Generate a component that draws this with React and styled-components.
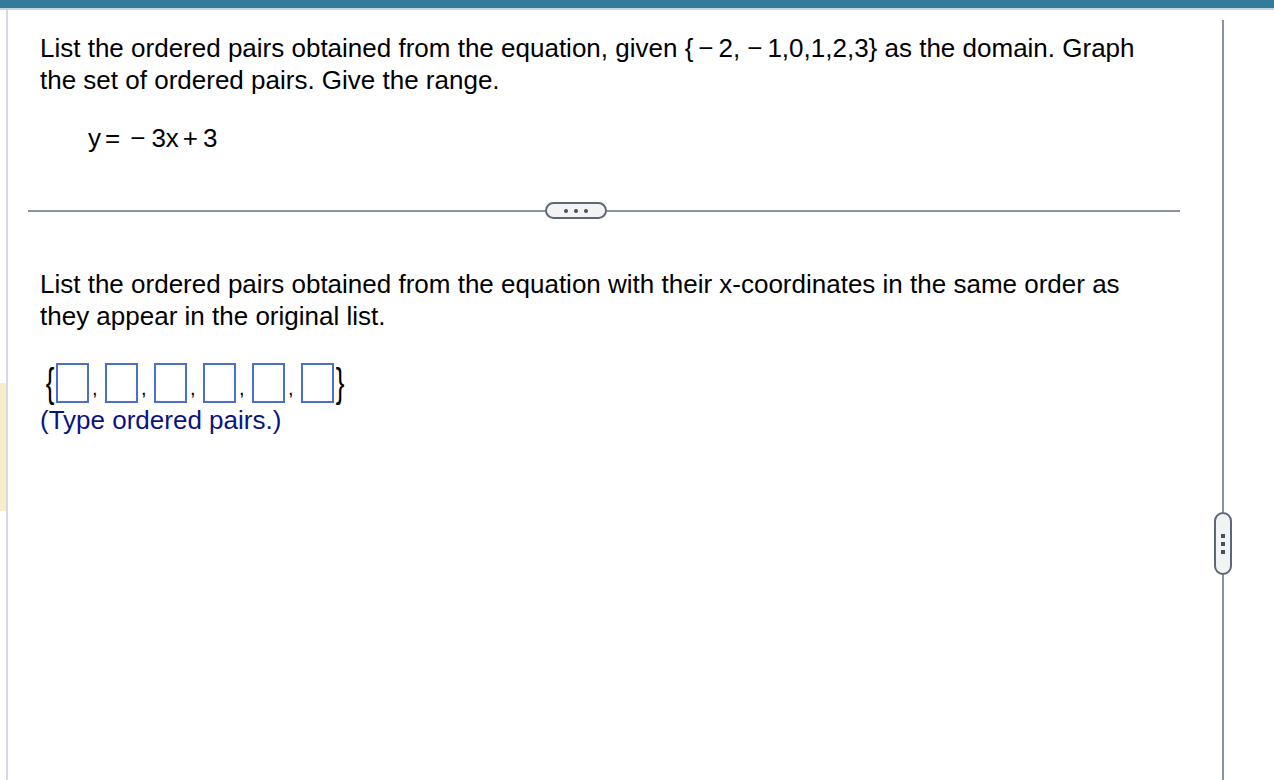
import React from 'react';
import styled, { createGlobalStyle } from 'styled-components';

const GlobalStyle = createGlobalStyle`
  html, body {
    margin: 0;
    padding: 0;
    background: #ffffff;
  }
  body {
    font-family: "Liberation Sans", Arial, Helvetica, sans-serif;
    color: #000;
  }
`;

export default function App() {
  const slots = [0, 1, 2, 3, 4, 5];
  return (
    <>
      <GlobalStyle />
      <Page>
        <TopBar />
        <TopStrip />
        <Body>
          <Gutter>
            <Marker />
          </Gutter>
          <GutterLine />
          <Main>
            <Question>
              List the ordered pairs obtained from the equation, given {'{'}
              <Minus>−</Minus>2,<Minus $l={7}>−</Minus>1,0,1,2,3{'}'} as the domain. Graph
              <br />
              the set of ordered pairs. Give the range.
            </Question>
            <Equation>
              y<Op $l={4} $r={10}>=</Op>
              <Op $l={0} $r={6}>−</Op>3x<Op $l={4} $r={5}>+</Op>3
            </Equation>

            <Separator>
              <HLine $w={517} />
              <HPill>
                <Dot />
                <Dot />
                <Dot />
              </HPill>
              <HLine />
            </Separator>

            <Question $top={49}>
              List the ordered pairs obtained from the equation with their x-coordinates in the same order as
              <br />
              they appear in the original list.
            </Question>

            <AnswerRow>
              <Brace>{'{'}</Brace>
              {slots.map((i) => (
                <React.Fragment key={i}>
                  <Box />
                  {i < slots.length - 1 && <Comma>,</Comma>}
                </React.Fragment>
              ))}
              <Brace>{'}'}</Brace>
            </AnswerRow>
            <Hint>(Type ordered pairs.)</Hint>
          </Main>
          <Divider>
            <VLine $h={492} />
            <VPill>
              <Square />
              <Square />
              <Square />
            </VPill>
            <VLine />
          </Divider>
          <Spare />
        </Body>
      </Page>
    </>
  );
}

const Page = styled.div`
  width: 1274px;
  height: 780px;
  display: flex;
  flex-direction: column;
  overflow: hidden;
`;

const TopBar = styled.div`
  height: 8px;
  background: #347a9b;
`;

const TopStrip = styled.div`
  height: 2px;
  background: #c6d2e2;
`;

const Body = styled.div`
  flex: 1;
  display: flex;
`;

const Gutter = styled.div`
  width: 6px;
`;

const Marker = styled.div`
  margin-top: 373px;
  height: 128px;
  background: #f7edca;
`;

const GutterLine = styled.div`
  width: 2px;
  background: #d5d9e3;
`;

const Main = styled.div`
  width: 1206px;
  padding-top: 22px;
`;

const Question = styled.p`
  margin: ${(p) => p.$top || 0}px 0 0 32px;
  font-size: 26px;
  line-height: 32px;
  color: #000;
  white-space: nowrap;
`;

const Minus = styled.span`
  margin: 0 5px 0 ${(p) => p.$l || 5}px;
`;

const Equation = styled.div`
  margin: 26px 0 0 80px;
  font-size: 26px;
  line-height: 32px;
  white-space: nowrap;
`;

const Op = styled.span`
  margin: 0 ${(p) => p.$r}px 0 ${(p) => p.$l}px;
`;

const Separator = styled.div`
  margin: 48px 34px 0 20px;
  height: 17px;
  display: flex;
  align-items: center;
`;

const HLine = styled.div`
  ${(p) => (p.$w ? `width: ${p.$w}px;` : 'flex: 1;')}
  height: 2px;
  background: #8a929f;
`;

const HPill = styled.div`
  width: 62px;
  height: 17px;
  box-sizing: border-box;
  border: 2px solid #5d6876;
  border-radius: 9px;
  background: #f2f3f5;
  display: flex;
  align-items: center;
  justify-content: center;
  gap: 6px;
`;

const Dot = styled.span`
  width: 4px;
  height: 4px;
  border-radius: 50%;
  background: #4a4f57;
`;

const AnswerRow = styled.div`
  margin: 31px 0 0 36px;
  height: 40px;
  display: flex;
  align-items: stretch;
`;

const Brace = styled.span`
  font-size: 26px;
  line-height: 40px;
  transform: scaleY(1.55);
  display: inline-block;
  width: 12px;
  text-align: center;
  font-weight: 300;
`;

const Box = styled.div`
  width: 33px;
  height: 40px;
  box-sizing: border-box;
  border: 2px solid #4a6fcd;
  background: #fff;
`;

const Comma = styled.span`
  width: 16px;
  font-size: 20px;
  line-height: 1;
  align-self: flex-end;
  padding-left: 3px;
  box-sizing: border-box;
  margin-bottom: 5px;
`;

const Hint = styled.div`
  margin: 1px 0 0 32px;
  font-size: 26px;
  line-height: 32px;
  color: #0a1480;
`;

const Divider = styled.div`
  width: 18px;
  padding-top: 10px;
  display: flex;
  flex-direction: column;
  align-items: center;
`;

const VLine = styled.div`
  width: 2px;
  background: #8a919f;
  ${(p) => (p.$h ? `height: ${p.$h}px;` : 'flex: 1;')}
`;

const VPill = styled.div`
  width: 18px;
  height: 63px;
  box-sizing: border-box;
  border: 2px solid #5d6876;
  border-radius: 9px;
  background: #f2f3f5;
  display: flex;
  flex-direction: column;
  align-items: center;
  justify-content: center;
  gap: 4px;
`;

const Square = styled.span`
  width: 4px;
  height: 4px;
  background: #4a4f57;
`;

const Spare = styled.div`
  flex: 1;
`;
